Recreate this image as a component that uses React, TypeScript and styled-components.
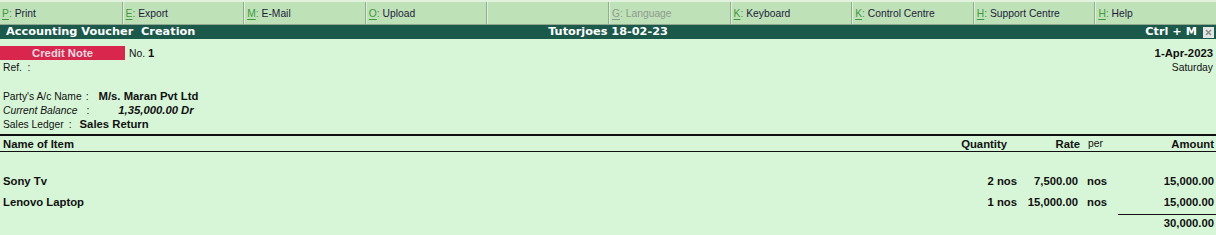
import React from "react";
import styled, { createGlobalStyle } from "styled-components";

const Global = createGlobalStyle`
  html, body { margin: 0; padding: 0; background: #d7f6d7; }
  body { font-family: "Liberation Sans", Arial, sans-serif; color: #111; }
  * { box-sizing: border-box; }
`;

const Page = styled.div`
  width: 1216px;
  height: 235px;
  overflow: hidden;
  background: #d7f6d7;
  display: flex;
  flex-direction: column;
`;

const MenuBar = styled.div`
  height: 25px;
  display: grid;
  grid-template-columns: repeat(10, 1fr);
  background: #bfe1b8;
  border-top: 2px solid #e2f2de;
  border-bottom: 1px solid #8fa88f;
`;

const MenuCell = styled.div<{ $first?: boolean; $disabled?: boolean }>`
  display: flex;
  align-items: center;
  padding-left: ${(p) => (p.$first ? "2px" : "3px")};
  font-size: 10.3px;
  color: ${(p) => (p.$disabled ? "#8d9a8d" : "#1c1c3a")};
  border-left: ${(p) => (p.$first ? "none" : "1px solid #93ad92")};
  box-shadow: ${(p) => (p.$first ? "none" : "inset 1px 0 0 #dcefd8")};
`;

const Key = styled.span<{ $disabled?: boolean }>`
  color: ${(p) => (p.$disabled ? "#8d9a8d" : "#3f9a3f")};
  u {
    text-decoration: underline;
    text-underline-offset: 2px;
  }
`;

const TitleBar = styled.div`
  height: 14px;
  background: #1b5a4b;
  color: #fff;
  font-family: "DejaVu Sans", Verdana, sans-serif;
  font-weight: bold;
  font-size: 11.3px;
  line-height: 14px;
  display: grid;
  grid-template-columns: 1fr auto 1fr;
  align-items: center;
  white-space: pre;
`;

const TitleLeft = styled.div`
  padding-left: 6px;
`;

const TitleRight = styled.div`
  display: flex;
  justify-content: flex-end;
  align-items: center;
  gap: 6px;
  padding-right: 2px;
`;

const CloseBox = styled.div`
  width: 11px;
  height: 11px;
  background: #e4e6e4;
  display: flex;
  align-items: center;
  justify-content: center;
`;

const Body = styled.div`
  display: flex;
  flex-direction: column;
  padding-top: 7px;
`;

const HeadRow = styled.div`
  display: flex;
  justify-content: space-between;
  align-items: center;
  height: 14px;
  padding-right: 3px;
`;

const Line = styled.div`
  display: flex;
  align-items: center;
  height: 14px;
  font-size: 10.3px;
`;

const VoucherType = styled.div`
  width: 125px;
  height: 14px;
  background: #d9264c;
  color: #f6dbe1;
  font-weight: bold;
  font-size: 11.3px;
  display: flex;
  align-items: center;
  justify-content: center;
`;

const VoucherNo = styled.span`
  margin-left: 4px;
  font-size: 10.3px;
  b { font-size: 11.3px; }
`;

const DateText = styled.span<{ $bold?: boolean }>`
  font-size: ${(p) => (p.$bold ? "11.3px" : "10.3px")};
  font-weight: ${(p) => (p.$bold ? "bold" : "normal")};
`;

const InfoBlock = styled.div`
  display: flex;
  flex-direction: column;
  margin-top: 15px;
  padding-left: 3px;
`;

const Label = styled.span<{ $italic?: boolean }>`
  font-style: ${(p) => (p.$italic ? "italic" : "normal")};
`;

const Colon = styled.span<{ $left: number }>`
  margin-left: ${(p) => p.$left}px;
`;

const Value = styled.span<{ $left: number; $italic?: boolean }>`
  margin-left: ${(p) => p.$left}px;
  font-weight: bold;
  font-size: 11.3px;
  font-style: ${(p) => (p.$italic ? "italic" : "normal")};
`;

const Table = styled.div`
  margin-top: 3px;
  border-top: 2px solid #111;
`;

const cols = "1fr 80px 63px 38px 98px";

const TableHead = styled.div`
  display: grid;
  grid-template-columns: ${cols};
  height: 16px;
  align-items: center;
  font-weight: bold;
  font-size: 11.3px;
  border-bottom: 1px solid #111;
`;

const Rows = styled.div`
  padding-top: 18px;
  display: flex;
  flex-direction: column;
`;

const ItemRow = styled.div`
  display: grid;
  grid-template-columns: ${cols};
  height: 21px;
  align-items: center;
  font-weight: bold;
  font-size: 11.3px;
`;

const Cell = styled.div<{ $align?: "left" | "right"; $pl?: number; $pr?: number; $normal?: boolean }>`
  text-align: ${(p) => p.$align || "left"};
  padding-left: ${(p) => p.$pl ?? 0}px;
  padding-right: ${(p) => p.$pr ?? 0}px;
  font-weight: ${(p) => (p.$normal ? "normal" : "bold")};
  font-size: ${(p) => (p.$normal ? "10.3px" : "11.3px")};
  white-space: nowrap;
`;

const TotalRow = styled.div`
  display: grid;
  grid-template-columns: ${cols};
  height: 17px;
  align-items: center;
  font-weight: bold;
  font-size: 11.3px;
  margin-top: 2px;
`;

const TotalCell = styled.div`
  grid-column: 5;
  border-top: 1px solid #111;
  text-align: right;
  padding-right: 2px;
  height: 17px;
  line-height: 16px;
`;

type MenuItem = { k: string; label: string; disabled?: boolean } | null;

const menu: MenuItem[] = [
  { k: "P", label: "Print" },
  { k: "E", label: "Export" },
  { k: "M", label: "E-Mail" },
  { k: "O", label: "Upload" },
  null,
  { k: "G", label: "Language", disabled: true },
  { k: "K", label: "Keyboard" },
  { k: "K", label: "Control Centre" },
  { k: "H", label: "Support Centre" },
  { k: "H", label: "Help" },
];

const items = [
  { name: "Sony Tv", qty: "2 nos", rate: "7,500.00", per: "nos", amount: "15,000.00" },
  { name: "Lenovo Laptop", qty: "1 nos", rate: "15,000.00", per: "nos", amount: "15,000.00" },
];

export default function App() {
  return (
    <Page>
      <Global />
      <MenuBar>
        {menu.map((m, i) => (
          <MenuCell key={i} $first={i === 0} $disabled={m?.disabled}>
            {m && (
              <>
                <Key $disabled={m.disabled}>
                  <u>{m.k}</u>:
                </Key>
                &nbsp;{m.label}
              </>
            )}
          </MenuCell>
        ))}
      </MenuBar>
      <TitleBar>
        <TitleLeft>Accounting Voucher  Creation</TitleLeft>
        <div>Tutorjoes 18-02-23</div>
        <TitleRight>
          <span>Ctrl + M</span>
          <CloseBox>
            <svg width="7" height="7" viewBox="0 0 7 7">
              <path d="M1 1L6 6M6 1L1 6" stroke="#8a8f8a" strokeWidth="1.6" />
            </svg>
          </CloseBox>
        </TitleRight>
      </TitleBar>
      <Body>
        <HeadRow>
          <Line>
            <VoucherType>Credit Note</VoucherType>
            <VoucherNo>
              No. <b>1</b>
            </VoucherNo>
          </Line>
          <DateText $bold>1-Apr-2023</DateText>
        </HeadRow>
        <HeadRow>
          <Line style={{ paddingLeft: 3 }}>Ref.&nbsp; :</Line>
          <DateText>Saturday</DateText>
        </HeadRow>
        <InfoBlock>
          <Line>
            <Label>Party's A/c Name</Label>
            <Colon $left={4}>:</Colon>
            <Value $left={10}>M/s. Maran Pvt Ltd</Value>
          </Line>
          <Line>
            <Label $italic>Current Balance</Label>
            <Colon $left={9}>:</Colon>
            <Value $left={29} $italic>1,35,000.00 Dr</Value>
          </Line>
          <Line>
            <Label>Sales Ledger</Label>
            <Colon $left={5}>:</Colon>
            <Value $left={8}>Sales Return</Value>
          </Line>
        </InfoBlock>
        <Table>
          <TableHead>
            <Cell $pl={3}>Name of Item</Cell>
            <Cell $align="right" $pr={10}>Quantity</Cell>
            <Cell $align="right" $pr={0}>Rate</Cell>
            <Cell $pl={8} $normal>per</Cell>
            <Cell $align="right" $pr={2}>Amount</Cell>
          </TableHead>
          <Rows>
            {items.map((it) => (
              <ItemRow key={it.name}>
                <Cell $pl={3}>{it.name}</Cell>
                <Cell $align="right">{it.qty}</Cell>
                <Cell $align="right" $pr={2}>{it.rate}</Cell>
                <Cell $pl={7}>{it.per}</Cell>
                <Cell $align="right" $pr={2}>{it.amount}</Cell>
              </ItemRow>
            ))}
            <TotalRow>
              <TotalCell>30,000.00</TotalCell>
            </TotalRow>
          </Rows>
        </Table>
      </Body>
    </Page>
  );
}
